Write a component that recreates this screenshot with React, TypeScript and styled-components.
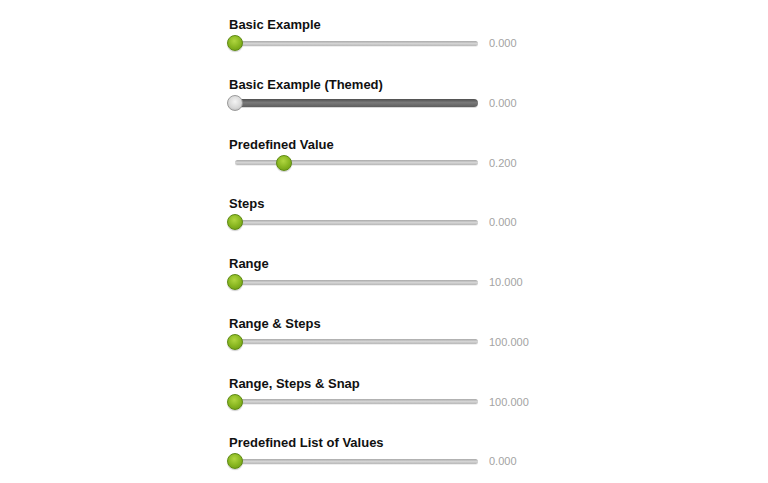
import React from "react";
import styled, { createGlobalStyle, css } from "styled-components";

const GlobalStyle = createGlobalStyle`
  html, body {
    margin: 0;
    padding: 0;
    background: #fff;
  }
  body {
    font-family: "Liberation Sans", Arial, sans-serif;
  }
`;

const Page = styled.main`
  width: 310px;
  margin: 0 auto;
  padding-top: 17px;
  display: flex;
  flex-direction: column;
  gap: 23.75px;
`;

const Example = styled.section`
  display: flex;
  flex-direction: column;
`;

const Title = styled.h3`
  margin: 0;
  font-size: 13px;
  line-height: 16px;
  font-weight: 700;
  color: #111;
`;

const SliderRow = styled.div`
  display: flex;
  align-items: center;
  height: 20px;
`;

const TrackArea = styled.div`
  position: relative;
  margin-left: 6px;
  width: 243px;
  height: 20px;
  display: flex;
  align-items: center;
`;

const Track = styled.div<{ $themed?: boolean }>`
  width: 100%;
  border-radius: 4px;
  ${({ $themed }) =>
    $themed
      ? css`
          height: 8px;
          background: linear-gradient(#4f4f4f, #7a7a7a 45%, #5e5e5e);
          box-shadow: 0 1px 0 #d8d8d8;
        `
      : css`
          height: 5px;
          background: linear-gradient(#a9a9a9, #d4d4d4 50%, #b8b8b8);
          box-shadow: 0 1px 0 #eee;
        `}
`;

const Knob = styled.div<{ $themed?: boolean }>`
  position: absolute;
  top: 50%;
  width: 16px;
  height: 16px;
  border-radius: 50%;
  transform: translate(-50%, -50%);
  box-sizing: border-box;
  ${({ $themed }) =>
    $themed
      ? css`
          background: radial-gradient(circle at 50% 40%, #f4f4f4, #d6d6d6 60%, #a9a9a9);
          border: 1px solid #9a9a9a;
        `
      : css`
          background: radial-gradient(circle at 45% 35%, #b0d640, #86b41f 55%, #669414);
          border: 1px solid #5e8a12;
          box-shadow: 0 1px 1px rgba(0, 0, 0, 0.2);
        `}
`;

const Value = styled.span`
  margin-left: 11px;
  font-size: 11px;
  color: #a3a3a3;
  line-height: 20px;
`;

type SliderDef = {
  title: string;
  position: number;
  value: string;
  themed?: boolean;
};

const sliders: SliderDef[] = [
  { title: "Basic Example", position: 0, value: "0.000" },
  { title: "Basic Example (Themed)", position: 0, value: "0.000", themed: true },
  { title: "Predefined Value", position: 0.2, value: "0.200" },
  { title: "Steps", position: 0, value: "0.000" },
  { title: "Range", position: 0, value: "10.000" },
  { title: "Range & Steps", position: 0, value: "100.000" },
  { title: "Range, Steps & Snap", position: 0, value: "100.000" },
  { title: "Predefined List of Values", position: 0, value: "0.000" },
];

export default function App() {
  return (
    <>
      <GlobalStyle />
      <Page>
        {sliders.map((s) => (
          <Example key={s.title}>
            <Title>{s.title}</Title>
            <SliderRow>
              <TrackArea>
                <Track $themed={s.themed} />
                <Knob
                  $themed={s.themed}
                  style={{ left: `${s.position * 100}%` }}
                />
              </TrackArea>
              <Value>{s.value}</Value>
            </SliderRow>
          </Example>
        ))}
      </Page>
    </>
  );
}
